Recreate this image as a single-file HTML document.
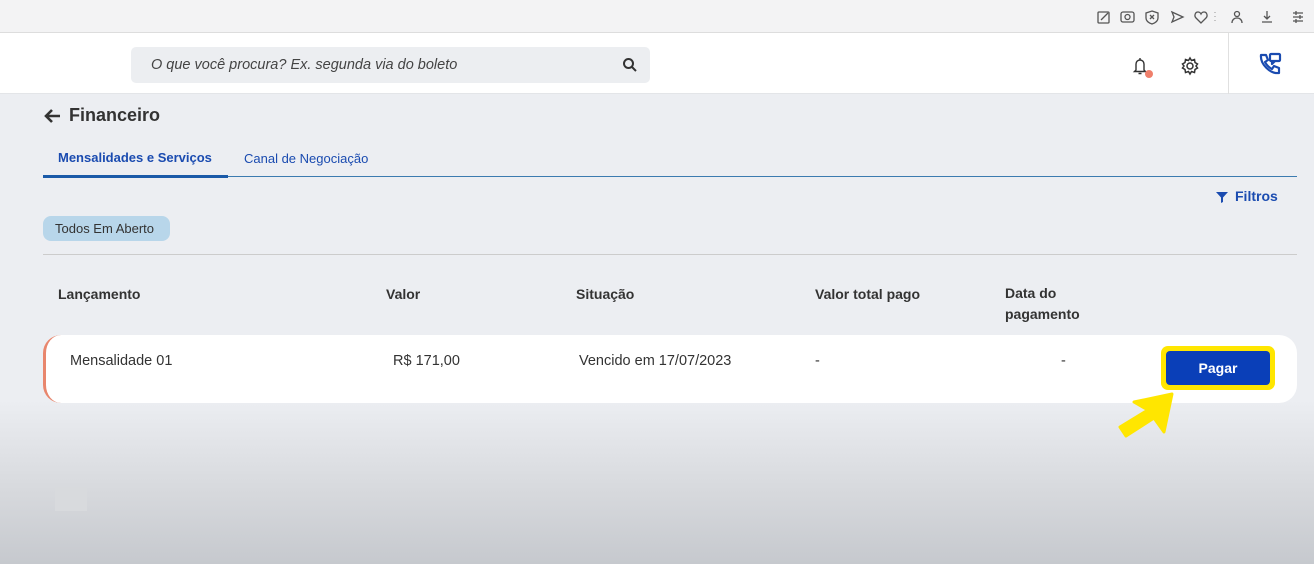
<!DOCTYPE html>
<html><head><meta charset="utf-8"><style>
*{margin:0;padding:0;box-sizing:border-box}
body{width:1314px;height:564px;overflow:hidden;font-family:"Liberation Sans",Arial,sans-serif;background:linear-gradient(to bottom,#eceef2 0px,#eceef2 400px,#d7d9dd 490px,#c6c9ce 564px);position:relative;color:#333}
.top{position:absolute;left:0;top:0;width:1314px;height:33px;background:#f3f3f4;border-bottom:1px solid #ddd}
.hdr{position:absolute;left:0;top:33px;width:1314px;height:61px;background:#fff;border-bottom:1px solid #e3e5e8}
.search{position:absolute;left:131px;top:14px;width:519px;height:36px;background:#eceef1;border-radius:5px;font-style:italic;font-size:14.5px;color:#444;padding:10px 20px}
.abs{position:absolute}
.th{position:absolute;top:286px;font-size:14px;font-weight:bold;color:#333}
.td{position:absolute;top:353px;font-size:14.5px;color:#333}
</style></head><body>
<div class="top">
<svg class="abs" style="left:1096px;top:9px" width="212" height="16" fill="none" stroke="#555" stroke-width="1.3">
<rect x="2" y="3" width="11" height="11" rx="1"/><path d="M5 11l7-7"/>
<rect x="25" y="3" width="13" height="10" rx="2"/><circle cx="31.5" cy="8" r="2.5"/>
<path d="M56 2l6 2v5c0 3-3 5-6 6-3-1-6-3-6-6V4z"/><path d="M54 6l4 4M58 6l-4 4"/>
<path d="M76 3l11 5-11 5 2-5z"/>
<path d="M105 14l-5-5c-2-2-1-6 2-6 1.5 0 2.5 1 3 2 .5-1 1.5-2 3-2 3 0 4 4 2 6z"/>
<path d="M119 3v1M119 7v1M119 11v1" stroke="#aaa"/>
<circle cx="141" cy="5" r="2.5"/><path d="M136 14c0-3 2-5 5-5s5 2 5 5"/>
<path d="M171 2v8M168 7l3 3 3-3M166 13h10"/>
<path d="M197 4h10M197 8h10M197 12h10M200 2v4M204 6v4M200 10v4"/>
</svg>
</div>
<div class="hdr">
<div class="search">O que você procura? Ex. segunda via do boleto</div>
<svg class="abs" style="left:622px;top:24px" width="16" height="16" fill="none" stroke="#333" stroke-width="2"><circle cx="6.5" cy="6.5" r="4.5"/><path d="M10 10l4 4"/></svg>
<svg class="abs" style="left:1130px;top:23px" width="26" height="24" fill="none" stroke="#333" stroke-width="1.4"><path d="M6 14V8a4 4 0 0 1 8 0v6l1.5 1.5h-11z"/><path d="M10 2v2M8.5 17.5h3"/><circle cx="19" cy="18" r="4" fill="#ef7f6b" stroke="none"/></svg>
<svg class="abs" style="left:1180px;top:23px" width="20" height="20" fill="none" stroke="#333" stroke-width="1.5"><circle cx="10" cy="10" r="3"/><path d="M10 2l1.5 2.5 3-1 .5 3 2.5 1.5-1.5 2 1.5 2-2.5 1.5-.5 3-3-1L10 18l-1.5-2.5-3 1-.5-3L2.5 12 4 10 2.5 8 5 6.5l.5-3 3 1z"/></svg>
<div class="abs" style="left:1228px;top:0;width:1px;height:61px;background:#e0e0e0"></div>
<svg class="abs" style="left:1258px;top:19px" width="26" height="26" fill="none" stroke="#1a4bb0" stroke-width="2.2" stroke-linejoin="round"><path d="M3 3h5l2 5-3 2c1.5 3 4 5.5 7 7l2-3 5 2v5c-9 1-19-9-18-18z"/><rect x="12" y="2" width="10" height="7" rx="1"/><path d="M14 9v3l3-3"/></svg>
</div>
<svg class="abs" style="left:44px;top:108px" width="18" height="16" fill="none" stroke="#333" stroke-width="2.6"><path d="M16 8H3M8 2L2 8l6 6"/></svg>
<div class="abs" style="left:69px;top:105px;font-size:18px;font-weight:bold;color:#333">Financeiro</div>
<div class="abs" style="left:58px;top:150px;font-size:13px;font-weight:bold;color:#1a4bb0">Mensalidades e Serviços</div>
<div class="abs" style="left:244px;top:151px;font-size:13px;color:#1a4bb0">Canal de Negociação</div>
<div class="abs" style="left:43px;top:176px;width:1254px;height:1px;background:#3b7bb0"></div>
<div class="abs" style="left:43px;top:175px;width:185px;height:3px;background:#1a5aa8"></div>
<svg class="abs" style="left:1216px;top:191px" width="12" height="12" fill="#1a4bb0"><path d="M0 1h12L7 6.5V11L5 12V6.5z"/></svg>
<div class="abs" style="left:1235px;top:188px;font-size:14px;font-weight:bold;color:#1a4bb0">Filtros</div>
<div class="abs" style="left:43px;top:216px;width:127px;height:25px;background:#b8d6ea;border-radius:8px;font-size:13px;color:#333;padding:5px 12px">Todos Em Aberto</div>
<div class="abs" style="left:43px;top:254px;width:1254px;height:1px;background:#ccc"></div>
<div class="th" style="left:58px">Lançamento</div>
<div class="th" style="left:386px">Valor</div>
<div class="th" style="left:576px">Situação</div>
<div class="th" style="left:815px">Valor total pago</div>
<div class="th" style="left:1005px;line-height:21px;top:283px">Data do<br>pagamento</div>
<div class="abs" style="left:43px;top:335px;width:1254px;height:68px;background:#fff;border-radius:18px;border-left:3px solid #e8866d"></div>
<div class="td" style="left:70px">Mensalidade 01</div>
<div class="td" style="left:393px">R$ 171,00</div>
<div class="td" style="left:579px">Vencido em 17/07/2023</div>
<div class="td" style="left:815px">-</div>
<div class="td" style="left:1061px">-</div>
<div class="abs" style="left:1161px;top:346px;width:114px;height:44px;background:#ffe600;border-radius:7px"></div>
<div class="abs" style="left:1166px;top:351px;width:104px;height:34px;background:#0a3fb8;border-radius:4px;color:#fff;font-weight:bold;font-size:14px;text-align:center;line-height:34px">Pagar</div>
<svg class="abs" style="left:1110px;top:388px" width="70" height="54"><path d="M62 6L54 44 44 30 16 48 10 39 38 22 24 14z" fill="#ffe600" stroke="#ffe600" stroke-width="3" stroke-linejoin="round"/></svg>
<div class="abs" style="left:55px;top:487px;width:32px;height:24px;background:#d8dadd"></div>
</body></html>
